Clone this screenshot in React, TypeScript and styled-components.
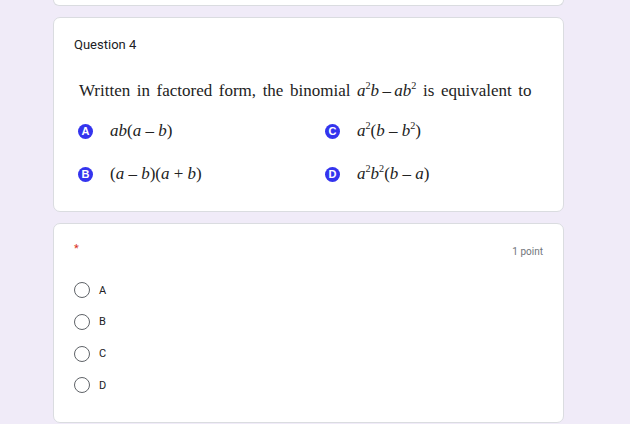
import React from "react";
import styled, { createGlobalStyle } from "styled-components";

const GlobalStyle = createGlobalStyle`
  html, body {
    margin: 0;
    padding: 0;
    background: #f0ebf8;
    font-family: Roboto, Arial, sans-serif;
  }
`;

const Page = styled.div`
  width: 511px;
  margin-left: 53px;
  display: flex;
  flex-direction: column;
  gap: 11px;
`;

const Card = styled.div`
  background: #fff;
  border: 1px solid #dadce0;
  border-radius: 7px;
  box-sizing: border-box;
`;

const StubCard = styled(Card)`
  height: 6px;
  border-top: none;
  border-radius: 0 0 7px 7px;
`;

const QuestionCard = styled(Card)`
  height: 195px;
  padding: 19px 20px 0 20px;
`;

const Title = styled.div`
  font-size: 13px;
  line-height: 16px;
  color: #202124;
`;

const Stem = styled.div`
  margin-top: 28px;
  padding-left: 5px;
  font-family: "Liberation Serif", "Times New Roman", serif;
  font-size: 17px;
  line-height: 20px;
  color: #222;
  word-spacing: 2.3px;
  white-space: nowrap;
`;

const Var = styled.i`
  font-style: italic;
`;

const Sup = styled.span`
  font-size: 0.6em;
  line-height: 0;
  vertical-align: 0.65em;
`;

const Options = styled.div`
  margin-top: 20px;
  display: grid;
  grid-template-columns: 247px 1fr;
  row-gap: 23px;
  padding-left: 4px;
`;

const Option = styled.div`
  display: flex;
  align-items: center;
  gap: 17px;
  font-family: "Liberation Serif", "Times New Roman", serif;
  font-size: 17px;
  line-height: 20px;
  color: #222;
`;

const Badge = styled.span`
  width: 15px;
  height: 15px;
  border-radius: 50%;
  background: #3434ee;
  color: #fff;
  font-family: "Liberation Sans", Arial, sans-serif;
  font-weight: bold;
  font-size: 11px;
  display: flex;
  align-items: center;
  justify-content: center;
  flex-shrink: 0;
`;

const AnswerCard = styled(Card)`
  height: 200px;
  padding: 18px 20px 0 20px;
`;

const Header = styled.div`
  display: flex;
  justify-content: space-between;
  align-items: flex-start;
`;

const Star = styled.span`
  color: #d93025;
  font-size: 11px;
  line-height: 14px;
`;

const Points = styled.span`
  margin-top: 3px;
  font-size: 10px;
  line-height: 14px;
  color: #70757a;
`;

const RadioList = styled.div`
  margin-top: 23px;
  display: flex;
  flex-direction: column;
  gap: 15.8px;
`;

const RadioRow = styled.label`
  display: flex;
  align-items: center;
  gap: 9px;
  font-size: 11px;
  color: #202124;
`;

const Radio = styled.span`
  width: 16px;
  height: 16px;
  box-sizing: border-box;
  border: 1.6px solid #5f6368;
  border-radius: 50%;
`;

export default function App() {
  return (
    <>
      <GlobalStyle />
      <Page>
        <StubCard />
        <QuestionCard>
          <Title>Question 4</Title>
          <Stem>
            Written in factored form, the binomial <Var>a</Var>
            <Sup>2</Sup>
            <Var>b</Var>&thinsp;–&thinsp;<Var>ab</Var>
            <Sup>2</Sup> is equivalent to
          </Stem>
          <Options>
            <Option>
              <Badge>A</Badge>
              <span>
                <Var>ab</Var>(<Var>a</Var> – <Var>b</Var>)
              </span>
            </Option>
            <Option>
              <Badge>C</Badge>
              <span>
                <Var>a</Var>
                <Sup>2</Sup>(<Var>b</Var> – <Var>b</Var>
                <Sup>2</Sup>)
              </span>
            </Option>
            <Option>
              <Badge>B</Badge>
              <span>
                (<Var>a</Var> – <Var>b</Var>)(<Var>a</Var> + <Var>b</Var>)
              </span>
            </Option>
            <Option>
              <Badge>D</Badge>
              <span>
                <Var>a</Var>
                <Sup>2</Sup>
                <Var>b</Var>
                <Sup>2</Sup>(<Var>b</Var> – <Var>a</Var>)
              </span>
            </Option>
          </Options>
        </QuestionCard>
        <AnswerCard>
          <Header>
            <Star>*</Star>
            <Points>1 point</Points>
          </Header>
          <RadioList>
            {["A", "B", "C", "D"].map((l) => (
              <RadioRow key={l}>
                <Radio />
                {l}
              </RadioRow>
            ))}
          </RadioList>
        </AnswerCard>
      </Page>
    </>
  );
}
